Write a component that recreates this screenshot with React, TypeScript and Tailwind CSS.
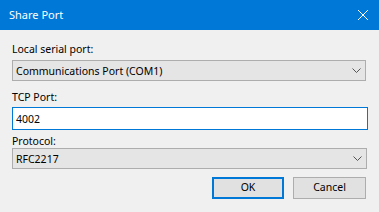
const font = { fontFamily: '"Noto Sans", "Open Sans", sans-serif' }

function Chevron() {
  return (
    <svg width="9" height="5" viewBox="0 0 9 5" fill="none" stroke="#555" strokeWidth="1">
      <polyline points="0.5,0.5 4.5,4.5 8.5,0.5" />
    </svg>
  )
}

function Combo({ value, width }: { value: string; width: string }) {
  return (
    <div className={`flex h-[21px] items-center justify-between border border-[#adadad] bg-[#e5e5e5] pl-[3px] pr-[4px] ${width}`}>
      <span className="text-[10.5px] leading-[14px] text-black">{value}</span>
      <Chevron />
    </div>
  )
}

export default function App() {
  return (
    <div className="h-[212px] w-[379px] overflow-hidden bg-[#f0f0f0]" style={font}>
      <div className="flex h-[30px] items-center justify-between bg-[#0078d7] pl-[9px] pr-[11px]">
        <span className="text-[11px] leading-[14px] text-white">Share Port</span>
        <svg width="10" height="10" viewBox="0 0 10 10" stroke="white" strokeWidth="1">
          <line x1="0" y1="0" x2="10" y2="10" />
          <line x1="10" y1="0" x2="0" y2="10" />
        </svg>
      </div>

      <div className="flex flex-col pl-[12px]">
        <label className="mt-[12px] text-[10.5px] leading-[14px] text-black">Local serial port:</label>
        <div className="mt-[4px]">
          <Combo value="Communications Port (COM1)" width="w-[354px]" />
        </div>

        <label className="mt-[9px] text-[10.5px] leading-[14px] text-black">TCP Port:</label>
        <input
          defaultValue="4002"
          className="mt-[3px] h-[23px] w-[356px] border border-[#0078d7] bg-white pl-[3px] text-[10.5px] text-black outline-none"
          style={font}
        />

        <label className="mt-[4px] text-[10.5px] leading-[14px] text-black">Protocol:</label>
        <Combo value="RFC2217" width="w-[355px]" />

        <div className="mt-[8px] flex w-[354px] justify-end gap-[9px]">
          <button className="h-[22px] w-[72px] border-2 border-[#0078d7] bg-[#e1e1e1] text-[10.5px] text-black">OK</button>
          <button className="h-[22px] w-[73px] border border-[#adadad] bg-[#e1e1e1] text-[10.5px] text-black">Cancel</button>
        </div>
      </div>
    </div>
  )
}
